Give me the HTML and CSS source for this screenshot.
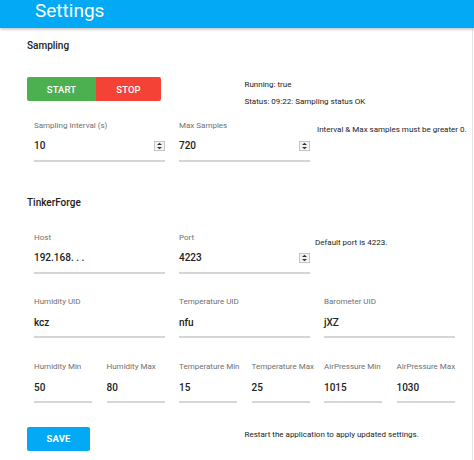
FILE: index.html
```html
<!DOCTYPE html>
<html>
<head>
<meta charset="utf-8">
<link rel="stylesheet" href="styles.css">
</head>
<body>
<header class="appbar">Settings</header>
<main class="main">
  <h2 class="section-title first">Sampling</h2>
  <div class="split-row buttons-row">
    <div class="btn-group">
      <button class="btn btn-start">START</button>
      <button class="btn btn-stop">STOP</button>
    </div>
    <div class="status">
      <p>Running: true</p>
      <p>Status: 09:22: Sampling status OK</p>
    </div>
  </div>

  <div class="grid row-first">
    <div class="field full">
      <div class="label">Sampling Interval (s)</div>
      <div class="value"><span>10</span><svg class="spin" width="11" height="10" viewBox="0 0 11 10"><rect x="0.5" y="0.5" width="10" height="9" fill="#f3f3f3" stroke="#c6c6c6"/><path d="M3 4 L5.5 1.8 L8 4 Z" fill="#333"/><path d="M3 6 L5.5 8.2 L8 6 Z" fill="#333"/></svg></div>
    </div>
    <div class="field full">
      <div class="label">Max Samples</div>
      <div class="value"><span>720</span><svg class="spin" width="11" height="10" viewBox="0 0 11 10"><rect x="0.5" y="0.5" width="10" height="9" fill="#f3f3f3" stroke="#c6c6c6"/><path d="M3 4 L5.5 1.8 L8 4 Z" fill="#333"/><path d="M3 6 L5.5 8.2 L8 6 Z" fill="#333"/></svg></div>
    </div>
    <div class="helper full">Interval &amp; Max samples must be greater 0.</div>
  </div>

  <h2 class="section-title second">TinkerForge</h2>
  <div class="grid row-host">
    <div class="field full">
      <div class="label">Host</div>
      <div class="value"><span>192.168. . .</span></div>
    </div>
    <div class="field full">
      <div class="label">Port</div>
      <div class="value"><span>4223</span><svg class="spin" width="11" height="10" viewBox="0 0 11 10"><rect x="0.5" y="0.5" width="10" height="9" fill="#f3f3f3" stroke="#c6c6c6"/><path d="M3 4 L5.5 1.8 L8 4 Z" fill="#333"/><path d="M3 6 L5.5 8.2 L8 6 Z" fill="#333"/></svg></div>
    </div>
    <div class="helper full port-help">Default port is 4223.</div>
  </div>

  <div class="grid row-next">
    <div class="field full">
      <div class="label">Humidity UID</div>
      <div class="value"><span>kcz</span></div>
    </div>
    <div class="field full">
      <div class="label">Temperature UID</div>
      <div class="value"><span>nfu</span></div>
    </div>
    <div class="field full">
      <div class="label">Barometer UID</div>
      <div class="value"><span>jXZ</span></div>
    </div>
  </div>

  <div class="grid row-next">
    <div class="field half">
      <div class="label">Humidity Min</div>
      <div class="value"><span>50</span></div>
    </div>
    <div class="field half">
      <div class="label">Humidity Max</div>
      <div class="value"><span>80</span></div>
    </div>
    <div class="field half">
      <div class="label">Temperature Min</div>
      <div class="value"><span>15</span></div>
    </div>
    <div class="field half">
      <div class="label">Temperature Max</div>
      <div class="value"><span>25</span></div>
    </div>
    <div class="field half">
      <div class="label">AirPressure Min</div>
      <div class="value"><span>1015</span></div>
    </div>
    <div class="field half">
      <div class="label">AirPressure Max</div>
      <div class="value"><span>1030</span></div>
    </div>
  </div>

  <div class="split-row save-row">
    <div>
      <button class="btn btn-save">SAVE</button>
    </div>
    <div class="status">
      <p>Restart the application to apply updated settings.</p>
    </div>
  </div>
</main>
</body>
</html>
```

FILE: styles.css
```css
html, body {
  margin: 0;
  padding: 0;
  background: #ffffff;
}

body {
  font-family: Roboto, "Liberation Sans", Arial, sans-serif;
  color: #212121;
  width: 474px;
  height: 460px;
  overflow: hidden;
}

.appbar {
  display: block;
  box-sizing: border-box;
  height: 28px;
  padding: 1px 0 0 35px;
  background: #03a9f4;
  color: #ffffff;
  font-size: 19px;
  line-height: 19px;
  font-weight: 400;
  box-shadow: 0 1px 3px rgba(0, 0, 0, 0.3);
  position: relative;
  z-index: 1;
}

.main {
  box-sizing: border-box;
  width: 473px;
  height: 432px;
  padding: 0 11px 0 27px;
  border-right: 1px solid #e4e4e4;
}

.section-title {
  margin: 0;
  font-size: 10px;
  line-height: 12px;
  font-weight: 500;
  color: #212121;
}

.section-title.first {
  padding-top: 12px;
}

.section-title.second {
  margin-top: 35px;
}

.split-row {
  display: grid;
  grid-template-columns: 217.5px 217.5px;
  grid-template-rows: 24px;
  align-items: start;
}

.buttons-row {
  margin-top: 25px;
}

.btn-group {
  display: flex;
}

.btn {
  border: none;
  margin: 0;
  padding: 0;
  height: 24px;
  font-family: Roboto, "Liberation Sans", Arial, sans-serif;
  font-size: 9.5px;
  font-weight: 500;
  color: #ffffff;
  letter-spacing: 0.1px;
}

.btn-start {
  width: 69px;
  background: #4caf50;
  border-radius: 2px 0 0 2px;
}

.btn-stop {
  width: 65px;
  background: #f44336;
  border-radius: 0 2px 2px 0;
}

.btn-save {
  width: 63px;
  background: #03a9f4;
  border-radius: 2px;
  font-weight: 700;
}

.status {
  padding-top: 3px;
  font-size: 8px;
  line-height: 10px;
  color: #222222;
  white-space: nowrap;
}

.status p {
  margin: 0;
}

.status p + p {
  margin-top: 6.7px;
}

.grid {
  display: grid;
  grid-template-columns: repeat(6, 72.5px);
}

.row-first {
  margin-top: 19.7px;
}

.row-host {
  margin-top: 24px;
}

.row-next {
  margin-top: 23.7px;
}

.field {
  padding: 0 7.5px 0 7px;
}

.full {
  grid-column: span 2;
}

.half {
  grid-column: span 1;
}

.label {
  font-size: 8px;
  line-height: 10px;
  color: #6f6f6f;
  white-space: nowrap;
}

.value {
  display: flex;
  align-items: center;
  justify-content: space-between;
  margin-top: 8.5px;
  height: 14px;
  padding-bottom: 6.5px;
  border-bottom: 2px solid #d6d6d6;
  font-size: 10px;
  line-height: 14px;
  font-weight: 500;
  color: #212121;
}

.spin {
  display: block;
}

.helper {
  padding-top: 4px;
  font-size: 8px;
  line-height: 10px;
  color: #222222;
  white-space: nowrap;
}

.port-help {
  padding-top: 5px;
  margin-left: -2px;
}

.save-row {
  margin-top: 23.7px;
}
```
